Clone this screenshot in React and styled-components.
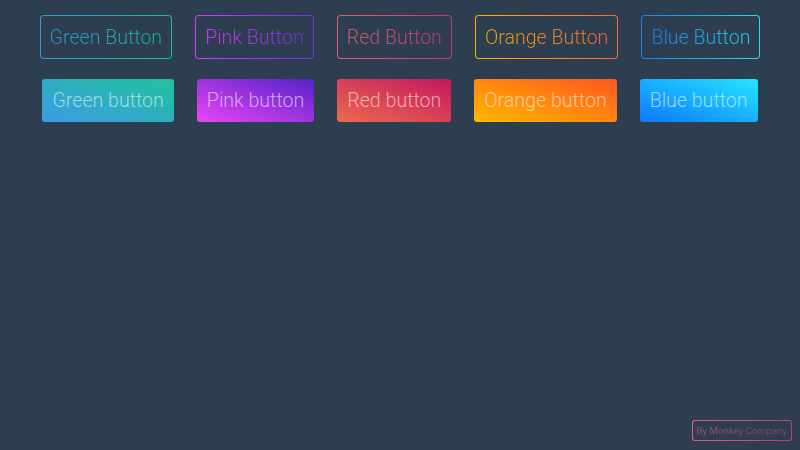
import React from "react";
import styled, { createGlobalStyle } from "styled-components";

const FONT = `"Roboto Light", Roboto, "Liberation Sans", sans-serif`;

const Global = createGlobalStyle`
  html, body { margin: 0; padding: 0; }
  body {
    background: #2c3e50;
    font-family: ${FONT};
    font-weight: 300;
    width: 800px;
    height: 450px;
    overflow: hidden;
  }
`;

const Page = styled.div`
  width: 800px;
  height: 450px;
  box-sizing: border-box;
  padding-top: 15px;
  display: flex;
  flex-direction: column;
  gap: 20px;
  position: relative;
`;

const Row = styled.div`
  display: flex;
  justify-content: center;
  gap: ${(p) => p.$gap}px;
`;

const OutlineButton = styled.button`
  height: 44px;
  padding: 0 9px;
  box-sizing: border-box;
  border: 1.5px solid transparent;
  border-radius: 4px;
  background: linear-gradient(#2c3e50, #2c3e50) padding-box,
    linear-gradient(to right, ${(p) => p.$from}, ${(p) => p.$to}) border-box;
  font-family: ${FONT};
  font-weight: 300;
  font-size: 19.6px;
  cursor: pointer;
  display: flex;
  align-items: center;
`;

const GradText = styled.span`
  background: linear-gradient(to right, ${(p) => p.$from}, ${(p) => p.$to});
  -webkit-background-clip: text;
  background-clip: text;
  color: transparent;
  opacity: 0.9;
`;

const FilledButton = styled.button`
  height: 43px;
  padding: 0 10px;
  box-sizing: border-box;
  border: none;
  border-radius: 3px;
  background: linear-gradient(to top right, ${(p) => p.$from}, ${(p) => p.$to});
  color: rgba(255, 255, 255, 0.56);
  font-family: ${FONT};
  font-weight: 300;
  font-size: 19.6px;
  cursor: pointer;
`;

const Badge = styled.div`
  position: absolute;
  right: 8px;
  bottom: 9px;
  height: 21px;
  padding: 0 4px;
  box-sizing: border-box;
  border: 1.5px solid transparent;
  border-radius: 3px;
  background: linear-gradient(#2c3e50, #2c3e50) padding-box,
    linear-gradient(to right, #e0606a, #c43a6c) border-box;
  display: flex;
  align-items: center;
  font-size: 9.8px;
  font-family: ${FONT};
  font-weight: 300;
`;

const outline = [
  { label: "Green Button", from: "#3498db", to: "#1abc9c" },
  { label: "Pink Button", from: "#d63af9", to: "#7432e0" },
  { label: "Red Button", from: "#e0606a", to: "#c43a6c" },
  { label: "Orange Button", from: "#ffb300", to: "#ff6b35" },
  { label: "Blue Button", from: "#1e7fe8", to: "#26dcf0" },
];

const filled = [
  { label: "Green button", from: "#3d9ae6", to: "#1fc39a" },
  { label: "Pink button", from: "#ea45f6", to: "#5322c8" },
  { label: "Red button", from: "#ec6a4f", to: "#c3185e" },
  { label: "Orange button", from: "#ffb800", to: "#ff5620" },
  { label: "Blue button", from: "#0d78ff", to: "#24e6ff" },
];

export default function App() {
  return (
    <>
      <Global />
      <Page>
        <Row $gap={23}>
          {outline.map((b) => (
            <OutlineButton key={b.label} $from={b.from} $to={b.to}>
              <GradText $from={b.from} $to={b.to}>{b.label}</GradText>
            </OutlineButton>
          ))}
        </Row>
        <Row $gap={23}>
          {filled.map((b) => (
            <FilledButton key={b.label} $from={b.from} $to={b.to}>
              {b.label}
            </FilledButton>
          ))}
        </Row>
        <Badge>
          <GradText $from="#e0606a" $to="#c43a6c">By Monkey Company</GradText>
        </Badge>
      </Page>
    </>
  );
}
